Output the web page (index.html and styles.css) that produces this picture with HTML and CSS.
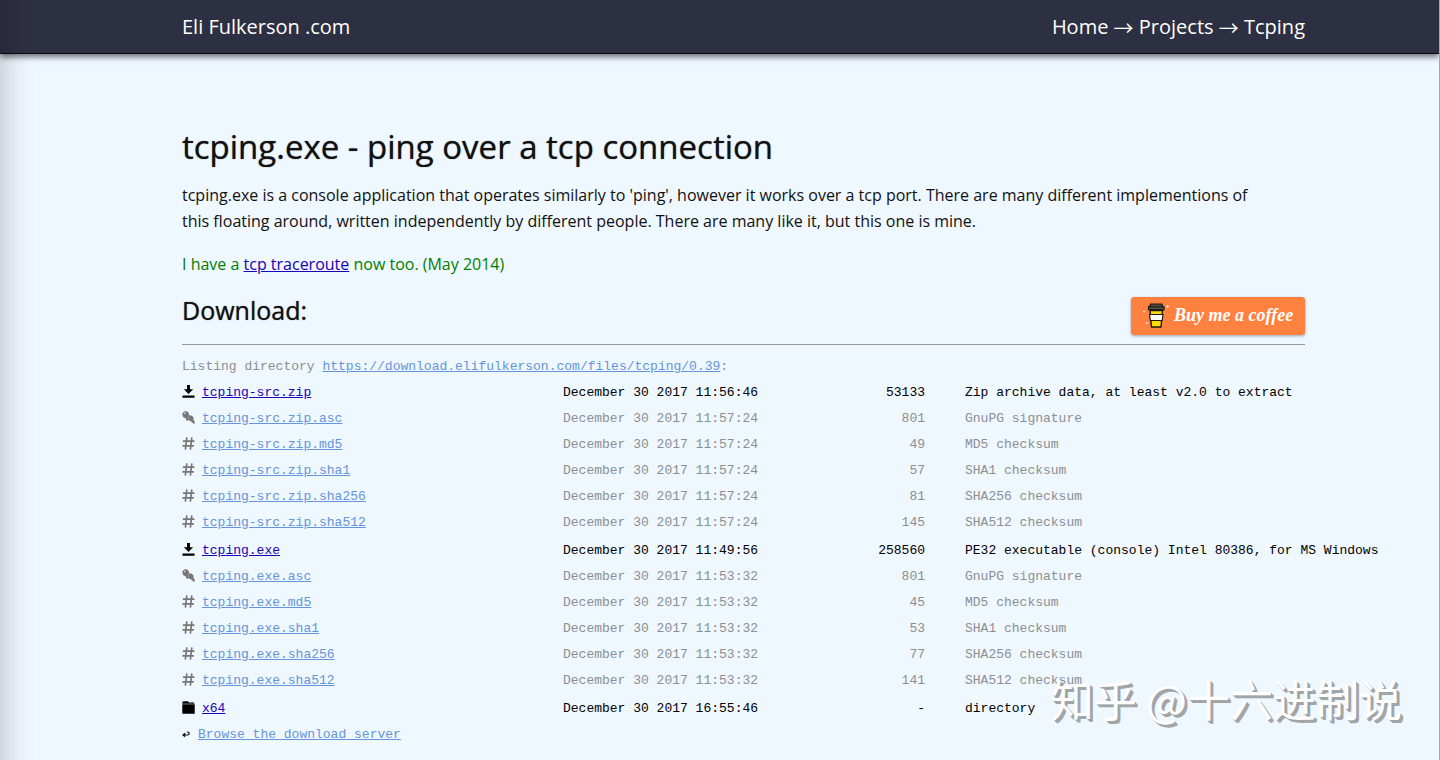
FILE: index.html
```html
<!DOCTYPE html>
<html lang="en">
<head>
<meta charset="utf-8">
<title>tcping.exe - ping over a tcp connection</title>
<link rel="stylesheet" href="styles.css">
</head>
<body>
<svg class="symbols" aria-hidden="true">
  <symbol id="i-download" viewBox="0 0 14 14"><path d="M5.400 0h3.200v4.600H12L7 9.800 2 4.600h3.400zM.5 11.200h13v2.400H.5z"/></symbol>
  <symbol id="i-key" viewBox="0 0 14 14"><path fill-rule="evenodd" d="M3.900.3C6.200.3 7.600 1.700 7.600 3.700c0 .7-.1 1.100-.4 1.600l.2 4.200-1.600 1.300-1.500-1.200.2-1-.8-.9C1.800 7.400.400 5.600.400 3.700.4 1.700 2 .3 3.900.3zM2.400 1.800v1.300h1.300V1.800z"/><path d="M7.600 4.600c2.600-.3 4.400 1 4.900 2.900.2.800.1 1.400-.1 2l1.400 2.700-.3 1.500-1.700-.3-.4-1-1-.1-.2-1.100-1.400-.4-1.400-.5z"/></symbol>
  <symbol id="i-hash" viewBox="0 0 14 14"><path d="M5.200.5 3.600 13.500M10.600.5 9 13.500M1 4.500h12.400M.4 9.500h12.400" fill="none" stroke="currentColor" stroke-width="1.800"/></symbol>
  <symbol id="i-folder" viewBox="0 0 14 14"><path d="M.3 3.600h13.400v10.100H.3zM.3 2.900V1.700L1.600.4h4.800l1.200 1.200h5.600v1.300z"/></symbol>
</svg>
<div class="page">
  <header class="topbar">
    <a class="brand" href="#">Eli Fulkerson .com</a>
    <nav class="crumbs"><a href="#">Home</a> <span class="arrow">→</span> <a href="#">Projects</a> <span class="arrow">→</span> <a href="#">Tcping</a></nav>
  </header>
  <main class="content">
    <h1>tcping.exe - ping over a tcp connection</h1>
    <p class="intro">tcping.exe is a console application that operates similarly to 'ping', however it works over a tcp port. There are many different implementions of this floating around, written independently by different people. There are many like it, but this one is mine.</p>
    <p class="note">I have a <a href="#">tcp traceroute</a> now too. (May 2014)</p>
    <div class="download-head">
      <h2>Download:</h2>
      <a class="coffee" href="#">
        <svg class="cup" viewBox="0 0 28 28" aria-hidden="true">
          <path d="M8 8.500h12.500L19 25H9.500z" fill="#ffdd00" stroke="#1d1a12" stroke-width="1.400"/>
          <path d="M7.500 12.500h13.500l-.8 6H8.300z" fill="#fff" stroke="#1d1a12" stroke-width="1.200"/>
          <path d="M6.500 4.800h15.500v2.900H6.500zM8.600 2.200h11.300l1 2.600H7.600z" fill="#55534a" stroke="#1d1a12" stroke-width="1.200"/>
          <path d="M25.500 3v3M24 4.500h3M2 8.500v2M1 9.500h2M5 20v2M4 21h2" stroke="#ffe3d2" stroke-width="1"/>
        </svg>
        <span>Buy me a coffee</span>
      </a>
    </div>
    <section class="listing">
      <p class="path">Listing directory <a href="#">https://download.elifulkerson.com/files/tcping/0.39</a>:</p>
      <table>
        <colgroup><col class="c-name"><col class="c-date"><col class="c-size"><col></colgroup>
        <tbody>
          <tr class="main"><td><svg><use href="#i-download"/></svg><a href="#">tcping-src.zip</a></td><td>December 30 2017 11:56:46</td><td>53133</td><td>Zip archive data, at least v2.0 to extract</td></tr>
          <tr><td><svg><use href="#i-key"/></svg><a href="#">tcping-src.zip.asc</a></td><td>December 30 2017 11:57:24</td><td>801</td><td>GnuPG signature</td></tr>
          <tr><td><svg><use href="#i-hash"/></svg><a href="#">tcping-src.zip.md5</a></td><td>December 30 2017 11:57:24</td><td>49</td><td>MD5 checksum</td></tr>
          <tr><td><svg><use href="#i-hash"/></svg><a href="#">tcping-src.zip.sha1</a></td><td>December 30 2017 11:57:24</td><td>57</td><td>SHA1 checksum</td></tr>
          <tr><td><svg><use href="#i-hash"/></svg><a href="#">tcping-src.zip.sha256</a></td><td>December 30 2017 11:57:24</td><td>81</td><td>SHA256 checksum</td></tr>
          <tr class="last"><td><svg><use href="#i-hash"/></svg><a href="#">tcping-src.zip.sha512</a></td><td>December 30 2017 11:57:24</td><td>145</td><td>SHA512 checksum</td></tr>
        </tbody>
        <tbody>
          <tr class="main"><td><svg><use href="#i-download"/></svg><a href="#">tcping.exe</a></td><td>December 30 2017 11:49:56</td><td>258560</td><td>PE32 executable (console) Intel 80386, for MS Windows</td></tr>
          <tr><td><svg><use href="#i-key"/></svg><a href="#">tcping.exe.asc</a></td><td>December 30 2017 11:53:32</td><td>801</td><td>GnuPG signature</td></tr>
          <tr><td><svg><use href="#i-hash"/></svg><a href="#">tcping.exe.md5</a></td><td>December 30 2017 11:53:32</td><td>45</td><td>MD5 checksum</td></tr>
          <tr><td><svg><use href="#i-hash"/></svg><a href="#">tcping.exe.sha1</a></td><td>December 30 2017 11:53:32</td><td>53</td><td>SHA1 checksum</td></tr>
          <tr><td><svg><use href="#i-hash"/></svg><a href="#">tcping.exe.sha256</a></td><td>December 30 2017 11:53:32</td><td>77</td><td>SHA256 checksum</td></tr>
          <tr class="last"><td><svg><use href="#i-hash"/></svg><a href="#">tcping.exe.sha512</a></td><td>December 30 2017 11:53:32</td><td>141</td><td>SHA512 checksum</td></tr>
        </tbody>
        <tbody>
          <tr class="main"><td><svg><use href="#i-folder"/></svg><a href="#">x64</a></td><td>December 30 2017 16:55:46</td><td>-</td><td>directory</td></tr>
        </tbody>
      </table>
      <p class="browse"><svg viewBox="0 0 8 14" aria-hidden="true"><path d="M1.500 8h4.200q1.500 0 1.500-1.500T5.700 5H5" fill="none" stroke="#111" stroke-width="1.200"/><path d="M0 8l3.200-2.500v5z" fill="#111"/></svg><a href="#">Browse the download server</a></p>
    </section>
  </main>
  <div class="watermark" lang="zh">知乎 @十六进制说</div>
</div>
</body>
</html>
```

FILE: styles.css
```css
* { box-sizing: border-box; }
body {
  margin: 0;
  font-family: "Open Sans", sans-serif;
  font-size: 16px;
  line-height: 26px;
  color: #111;
  background: #eff7ff;
}
a { color: #1a00b8; }
.symbols { display: none; }
.page {
  position: relative;
  min-height: 100vh;
  overflow: hidden;
  border-right: 1px solid #a2a6ab;
}
.page::before {
  content: "";
  position: absolute;
  inset: 0 auto 0 0;
  width: 36px;
  z-index: 2;
  background: linear-gradient(to right, rgba(0, 0, 0, .13), rgba(0, 0, 0, .03) 50%, transparent);
}
.topbar {
  display: flex;
  justify-content: space-between;
  align-items: center;
  height: 54px;
  padding: 0 134px 0 182px;
  font-size: 20px;
  background: #2d2f42;
  border-bottom: 1px solid #0c0c12;
  box-shadow: 0 3px 6px rgba(0, 0, 0, .55);
}
.topbar a { text-decoration: none; }
.topbar, .topbar a { color: #fff; }
.arrow { font-family: "Noto Sans CJK SC", sans-serif; line-height: 20px; vertical-align: -2px; }
.content { padding: 67px 134px 0 182px; }
h1, h2, p { margin: 0; font-weight: 400; }
h1, h2 { text-shadow: 0 0 1px #555; }
h1 { font-size: 33px; line-height: 52px; margin-bottom: 9px; }
.intro { max-width: 1090px; }
.note { margin-top: 17px; color: #008000; }
.download-head {
  display: flex;
  justify-content: space-between;
  align-items: center;
  height: 60px;
  margin-top: 8px;
  padding-top: 2px;
  border-bottom: 1px solid #999;
}
h2 { font-size: 25px; line-height: 38px; align-self: flex-start; padding-top: 4px; }
.coffee {
  display: flex;
  align-items: center;
  width: 174px;
  height: 38px;
  padding-left: 10px;
  gap: 3px;
  color: #fff;
  font: italic bold 18px "Liberation Serif", serif;
  white-space: nowrap;
  text-decoration: none;
  background: #ff813f;
  border-radius: 3px;
  box-shadow: 0 1px 3px rgba(100, 110, 130, .6);
}
.cup { width: 30px; height: 28px; }
.listing {
  padding-top: 9px;
  font-family: "Liberation Mono", monospace;
  font-size: 13px;
  color: #8c8f92;
}
.listing a { color: #6495dc; }
table { width: 100%; table-layout: fixed; border-collapse: collapse; }
.c-name { width: 381px; }
.c-date { width: 241px; }
.c-size { width: 121px; }
td { height: 26px; padding: 0; line-height: 26px; white-space: nowrap; }
td:nth-child(3) { text-align: right; }
td:nth-child(4) { padding-left: 40px; }
td svg {
  width: 13px;
  height: 13px;
  margin-right: 7px;
  vertical-align: -2px;
  color: #777;
  fill: currentColor;
}
.last td { height: 28px; padding-bottom: 2px; }
.main, .main svg { color: #000; }
.listing .main a { color: #1a00b8; }
.browse svg { width: 8px; height: 14px; margin-right: 8px; vertical-align: -3px; }
.watermark {
  position: absolute;
  right: 37px;
  bottom: 30px;
  font-family: "Noto Sans CJK SC", sans-serif;
  font-size: 43px;
  line-height: 64px;
  color: #fff;
  text-shadow: 1px 1px 0 #a2a5a8, 2px 2px 0 #a2a5a8, 3px 3px 0 #a2a5a8;
}
```
